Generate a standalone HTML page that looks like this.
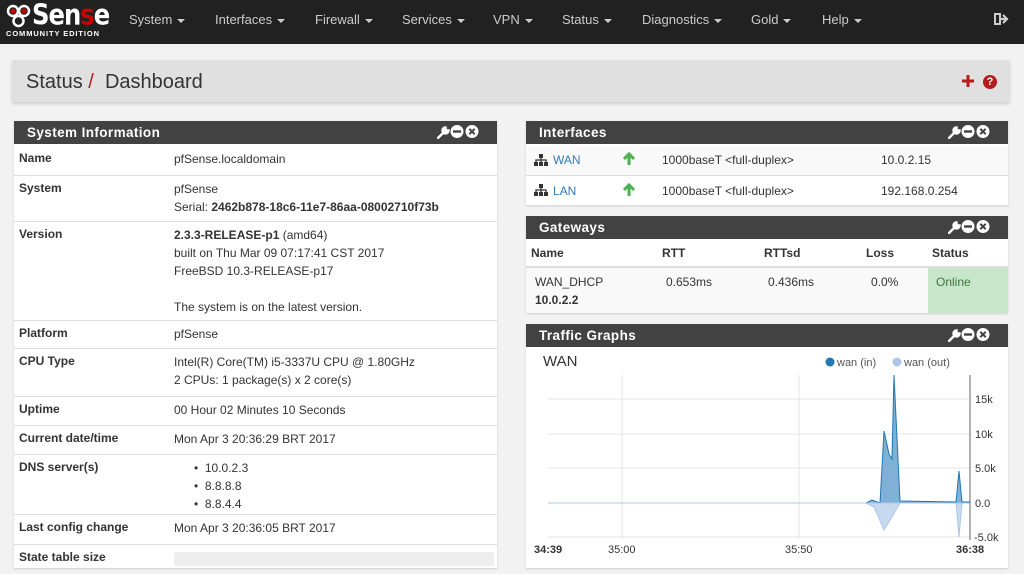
<!DOCTYPE html>
<html><head><meta charset="utf-8"><style>
*{box-sizing:border-box;margin:0;padding:0}
body{width:1024px;height:568px;overflow:hidden;background:#f2f2f2;font-family:"Liberation Sans",sans-serif;font-size:12px;color:#333;position:relative}
.nav{position:absolute;left:0;top:0;width:1024px;height:44px;background:#212121}
.nav .m{position:absolute;top:12px;color:#ccc;font-size:13px}
.car{display:inline-block;border-left:4px solid transparent;border-right:4px solid transparent;border-top:4px solid #ccc;vertical-align:middle;margin-left:5px}
.bc{position:absolute;left:12px;top:60px;width:998px;height:42px;background:#e0e0e0;box-shadow:0 2px 3px rgba(0,0,0,.15);border-radius:2px}
.panel{position:absolute;background:#fff;box-shadow:0 1px 2px rgba(0,0,0,.15)}
.ph{height:23px;background:#424242;color:#fff;font-weight:bold;font-size:13.5px;padding:4px 13px;letter-spacing:.4px;position:relative}
.ic{position:absolute;right:18px;top:4px}
.row{position:absolute;left:0;width:100%;border-top:1px solid #ddd}
.lb{position:absolute;left:5px;top:5px;font-weight:bold}
.vl{position:absolute;left:160px;top:4px;line-height:18px}
</style></head><body>
<svg width="0" height="0" style="position:absolute"><defs>
<g id="icons"><path d="M1 13 L7 7 M8.5 2.5 a3 3 0 1 0 3 3 l-2 0 l-1 -1 z" stroke="#fff" stroke-width="2.4" fill="#fff" stroke-linecap="round"/><circle cx="20" cy="6.5" r="6.5" fill="#fff"/><rect x="16" y="5.3" width="8" height="2.4" fill="#424242"/><circle cx="35" cy="6.5" r="6.5" fill="#fff"/><path d="M32.3 3.8 L37.7 9.2 M37.7 3.8 L32.3 9.2" stroke="#424242" stroke-width="2"/></g>
<g id="net"><rect x="5" y="0" width="4" height="4" fill="#333"/><rect x="0" y="8" width="4" height="4" fill="#333"/><rect x="5" y="8" width="4" height="4" fill="#333"/><rect x="10" y="8" width="4" height="4" fill="#333"/><path d="M7 4 V8 M2 8 V6 H12 V8" stroke="#333" stroke-width="1.3" fill="none"/></g>
<g id="up"><path d="M6 13 V3 M1 7 L6 2 L11 7" stroke="#4caf50" stroke-width="3" fill="none"/></g>
</defs></svg>
<div class="nav">
<svg width="28" height="26" viewBox="0 0 28 26" style="position:absolute;left:6px;top:4px"><circle cx="7" cy="7" r="5" fill="none" stroke="#fff" stroke-width="2.5"/><circle cx="18" cy="7" r="5" fill="none" stroke="#fff" stroke-width="2.5"/><circle cx="12.5" cy="17" r="5" fill="none" stroke="#fff" stroke-width="2.5"/><circle cx="7" cy="7" r="2.5" fill="#c00"/><circle cx="18" cy="7" r="2.5" fill="#c00"/></svg>
<div style="position:absolute;left:32px;top:0px;color:#fff;font-weight:bold;font-size:27px;font-family:'DejaVu Sans Condensed','Liberation Sans Narrow',sans-serif;letter-spacing:-1px;transform:scaleY(1.05)">Sen<span style="color:#c00">s</span>e</div>
<div style="position:absolute;left:6px;top:29px;color:#fff;font-size:7.5px;font-weight:bold;letter-spacing:.9px">COMMUNITY EDITION</div>
<div class="m" style="left:129px">System<i class="car"></i></div>
<div class="m" style="left:215px">Interfaces<i class="car"></i></div>
<div class="m" style="left:315px">Firewall<i class="car"></i></div>
<div class="m" style="left:402px">Services<i class="car"></i></div>
<div class="m" style="left:493px">VPN<i class="car"></i></div>
<div class="m" style="left:562px">Status<i class="car"></i></div>
<div class="m" style="left:642px">Diagnostics<i class="car"></i></div>
<div class="m" style="left:751px">Gold<i class="car"></i></div>
<div class="m" style="left:822px">Help<i class="car"></i></div>
<svg width="16" height="14" style="position:absolute;left:994px;top:12px"><path d="M1 2 H6 V12 H1 Z" fill="none" stroke="#ccc" stroke-width="2"/><path d="M5 7 H12 M9 3 L13 7 L9 11" stroke="#ccc" stroke-width="2.2" fill="none"/></svg>
</div>
<div class="bc"><div style="position:absolute;left:14px;top:11px;font-size:20px;color:#333">Status <span style="color:#b71c1c">/</span>&nbsp; Dashboard</div>
<svg width="12" height="12" style="position:absolute;right:36px;top:15px"><path d="M6 0 V12 M0 6 H12" stroke="#b71c1c" stroke-width="3"/></svg>
<div style="position:absolute;right:13px;top:15px;width:14px;height:14px;border-radius:50%;background:#b71c1c;color:#fff;font-size:11px;font-weight:bold;text-align:center;line-height:14px">?</div></div>

<div class="panel" style="left:14px;top:121px;width:483px;height:447px">
<div class="ph">System Information<svg class="ic" width="42" height="14"><use href="#icons"/></svg></div>
<div class="row" style="top:25px;height:29px;border-top:none"><div class="lb">Name</div><div class="vl">pfSense.localdomain</div></div>
<div class="row" style="top:54px;height:46px"><div class="lb">System</div><div class="vl">pfSense<br>Serial: <b>2462b878-18c6-11e7-86aa-08002710f73b</b></div></div>
<div class="row" style="top:100px;height:99px"><div class="lb">Version</div><div class="vl"><b>2.3.3-RELEASE-p1</b> (amd64)<br>built on Thu Mar 09 07:17:41 CST 2017<br>FreeBSD 10.3-RELEASE-p17<br><br>The system is on the latest version.</div></div>
<div class="row" style="top:199px;height:28px"><div class="lb">Platform</div><div class="vl">pfSense</div></div>
<div class="row" style="top:227px;height:48px"><div class="lb">CPU Type</div><div class="vl">Intel(R) Core(TM) i5-3337U CPU @ 1.80GHz<br>2 CPUs: 1 package(s) x 2 core(s)</div></div>
<div class="row" style="top:275px;height:29px"><div class="lb">Uptime</div><div class="vl">00 Hour 02 Minutes 10 Seconds</div></div>
<div class="row" style="top:304px;height:29px"><div class="lb">Current date/time</div><div class="vl">Mon Apr 3 20:36:29 BRT 2017</div></div>
<div class="row" style="top:333px;height:60px"><div class="lb">DNS server(s)</div><div class="vl" style="left:180px">•&nbsp; 10.0.2.3<br>•&nbsp; 8.8.8.8<br>•&nbsp; 8.8.4.4</div></div>
<div class="row" style="top:393px;height:30px"><div class="lb">Last config change</div><div class="vl">Mon Apr 3 20:36:05 BRT 2017</div></div>
<div class="row" style="top:423px;height:30px"><div class="lb">State table size</div><div style="position:absolute;left:160px;top:7px;width:320px;height:14px;background:#eee;border-radius:2px"></div></div>
</div>

<div class="panel" style="left:526px;top:121px;width:482px;height:84px">
<div class="ph">Interfaces<svg class="ic" width="42" height="14"><use href="#icons"/></svg></div>
<div class="row" style="top:25px;height:29px;border-top:none;background:#f9f9f9"><svg width="14" height="12" style="position:absolute;left:8px;top:8px"><use href="#net"/></svg><div style="position:absolute;left:27px;top:7px;color:#337ab7">WAN</div><svg width="12" height="14" style="position:absolute;left:97px;top:6px"><use href="#up"/></svg><div style="position:absolute;left:136px;top:7px">1000baseT &lt;full-duplex&gt;</div><div style="position:absolute;left:355px;top:7px">10.0.2.15</div></div>
<div class="row" style="top:54px;height:30px"><svg width="14" height="12" style="position:absolute;left:8px;top:8px"><use href="#net"/></svg><div style="position:absolute;left:27px;top:8px;color:#337ab7">LAN</div><svg width="12" height="14" style="position:absolute;left:97px;top:7px"><use href="#up"/></svg><div style="position:absolute;left:136px;top:8px">1000baseT &lt;full-duplex&gt;</div><div style="position:absolute;left:355px;top:8px">192.168.0.254</div></div>
</div>

<div class="panel" style="left:526px;top:216px;width:482px;height:97px">
<div class="ph">Gateways<svg class="ic" width="42" height="14"><use href="#icons"/></svg></div>
<div style="position:absolute;top:30px;left:5px;font-weight:bold">Name</div><div style="position:absolute;top:30px;left:136px;font-weight:bold">RTT</div><div style="position:absolute;top:30px;left:238px;font-weight:bold">RTTsd</div><div style="position:absolute;top:30px;left:340px;font-weight:bold">Loss</div><div style="position:absolute;top:30px;left:406px;font-weight:bold">Status</div>
<div class="row" style="top:50px;height:47px;border-top:2px solid #ddd;background:#f9f9f9">
<div style="position:absolute;left:9px;top:5px;line-height:18px">WAN_DHCP<br><b>10.0.2.2</b></div><div style="position:absolute;left:140px;top:7px">0.653ms</div><div style="position:absolute;left:242px;top:7px">0.436ms</div><div style="position:absolute;left:345px;top:7px">0.0%</div>
<div style="position:absolute;left:402px;top:0;width:80px;height:45px;background:#c8e6c9;color:#3c763d;padding:7px 8px">Online</div></div>
</div>

<div class="panel" style="left:526px;top:324px;width:482px;height:244px">
<div class="ph">Traffic Graphs<svg class="ic" width="42" height="14"><use href="#icons"/></svg></div>
<svg width="482" height="221" style="position:absolute;left:0;top:23px" font-family="Liberation Sans" font-size="11">
<text x="17" y="19" font-size="15" fill="#333">WAN</text>
<circle cx="304" cy="15" r="4.5" fill="#1f77b4"/><text x="311" y="19" fill="#555">wan (in)</text>
<circle cx="371" cy="15" r="4.5" fill="#aec7e8"/><text x="378" y="19" fill="#555">wan (out)</text>
<g stroke="#e5e5e5"><line x1="96" y1="28" x2="96" y2="192"/><line x1="273" y1="28" x2="273" y2="192"/><line x1="22" y1="52" x2="444" y2="52"/><line x1="22" y1="87" x2="444" y2="87"/><line x1="22" y1="121" x2="444" y2="121"/><line x1="22" y1="190" x2="444" y2="190"/></g>
<path d="M22 156 L340 156 L346 153 L354 156 L358 84 L363 107 L366 112 L368 28 L374 154 L430 155 L433 124 L436 155 L444 155 L444 156Z" fill="#7fb0d6" stroke="#1f77b4"/>
<path d="M22 156 L340 156 L348 160 L358 183 L366 170 L374 156 L430 156 L433 190 L436 156 L444 156Z" fill="#c6d9ef" stroke="#aec7e8"/>
<line x1="444" y1="28" x2="444" y2="193" stroke="#666"/>
<g fill="#333"><text x="449" y="56">15k</text><text x="449" y="91">10k</text><text x="449" y="125">5.0k</text><text x="449" y="160">0.0</text><text x="448" y="194">-5.0k</text>
<text x="8" y="206" font-weight="bold">34:39</text><text x="82" y="206">35:00</text><text x="259" y="206">35:50</text><text x="430" y="206" font-weight="bold">36:38</text></g>
</svg>
</div>
</body></html>
